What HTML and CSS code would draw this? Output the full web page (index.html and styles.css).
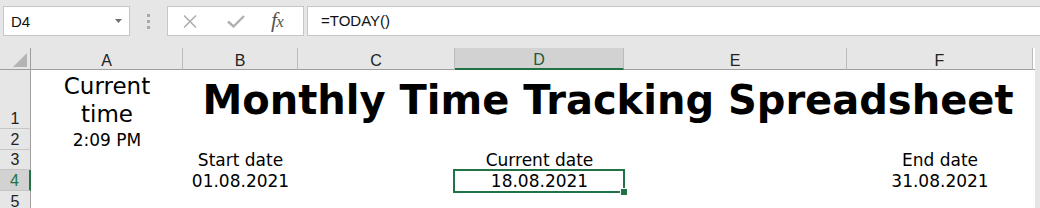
FILE: index.html
```html
<!DOCTYPE html>
<html lang="en">
<head>
  <meta charset="UTF-8">
  <meta name="viewport" content="width=device-width, initial-scale=1.0">
  <title>Monthly Time Tracking Spreadsheet</title>
  <link rel="stylesheet" href="styles.css">
</head>
<body>
  <!-- Formula bar -->
  <div class="formula-bar">
    <div class="name-box">
      <span>D4</span>
      <svg class="caret" width="7" height="4" viewBox="0 0 7 4"><polygon points="0,0 7,0 3.5,4" fill="#707070"/></svg>
    </div>
    <div class="grip"><i></i><i></i><i></i></div>
    <div class="fx-buttons">
      <svg class="icon-cancel" width="14" height="13" viewBox="0 0 14 13">
        <path d="M1 0.5 L13 12.5 M13 0.5 L1 12.5" stroke="#a8a8a8" stroke-width="1.4" fill="none"/>
      </svg>
      <svg class="icon-enter" width="18" height="13" viewBox="0 0 18 13">
        <path d="M1 6.5 L6.5 11.5 L17 1" stroke="#b0b0b0" stroke-width="2.4" fill="none"/>
      </svg>
      <span class="fx">f<small>x</small></span>
    </div>
    <div class="formula-input">=TODAY()</div>
  </div>

  <!-- Sheet grid -->
  <div class="sheet">
    <div class="corner"><span class="corner-tri"></span></div>
    <div class="col-head">A</div>
    <div class="col-head">B</div>
    <div class="col-head">C</div>
    <div class="col-head active">D</div>
    <div class="col-head">E</div>
    <div class="col-head">F</div>
    <div class="col-head rest"></div>

    <!-- Row 1 -->
    <div class="row-head">1</div>
    <div class="cell big">Current<br>time</div>
    <div class="cell title">Monthly Time Tracking Spreadsheet</div>
    <div class="cell"></div>

    <!-- Row 2 -->
    <div class="row-head">2</div>
    <div class="cell">2:09 PM</div>
    <div class="cell"></div><div class="cell"></div><div class="cell"></div>
    <div class="cell"></div><div class="cell"></div><div class="cell"></div>

    <!-- Row 3 -->
    <div class="row-head">3</div>
    <div class="cell"></div>
    <div class="cell">Start date</div>
    <div class="cell"></div>
    <div class="cell">Current date</div>
    <div class="cell"></div>
    <div class="cell">End date</div>
    <div class="cell"></div>

    <!-- Row 4 -->
    <div class="row-head active">4</div>
    <div class="cell"></div>
    <div class="cell">01.08.2021</div>
    <div class="cell"></div>
    <div class="cell selected">18.08.2021</div>
    <div class="cell"></div>
    <div class="cell">31.08.2021</div>
    <div class="cell"></div>

    <!-- Row 5 -->
    <div class="row-head">5</div>
    <div class="cell"></div><div class="cell"></div><div class="cell"></div>
    <div class="cell"></div><div class="cell"></div><div class="cell"></div><div class="cell"></div>
  </div>
</body>
</html>
```

FILE: styles.css
```css
/* Page */
body {
  margin: 0;
  width: 1040px;
  height: 208px;
  overflow: hidden;
  background-color: #e6e6e6;
  font-family: "Liberation Sans", Arial, sans-serif;
}

/* Formula bar */
.formula-bar {
  display: flex;
  align-items: flex-start;
  height: 48px;
  box-sizing: border-box;
  padding: 6px 0 0 3px;
}

.name-box {
  display: flex;
  align-items: center;
  width: 127px;
  height: 30px;
  box-sizing: border-box;
  padding: 0 7px 0 7px;
  border: 1px solid #c6c6c6;
  background-color: #fff;
  font-size: 15px;
  color: #111;
}

.caret {
  margin-left: auto;
  margin-top: -1px;
}

.grip {
  display: flex;
  flex-direction: column;
  gap: 3px;
  margin-left: 17px;
  padding-top: 8px;
}

.grip i {
  display: block;
  width: 3px;
  height: 3px;
  background-color: #a9a9a9;
}

.fx-buttons {
  display: flex;
  align-items: center;
  width: 137px;
  height: 30px;
  box-sizing: border-box;
  margin-left: 17px;
  padding-left: 15px;
  border: 1px solid #c6c6c6;
  background-color: #fff;
}

.icon-enter {
  margin-left: 30px;
  margin-top: 1px;
}

.fx {
  margin-left: 26px;
  margin-top: -2px;
  font-family: "Liberation Serif", "Times New Roman", serif;
  font-style: italic;
  font-size: 22px;
  color: #555;
  letter-spacing: -1px;
}

.fx small {
  font-size: 17px;
}

.formula-input {
  flex: 1;
  height: 30px;
  box-sizing: border-box;
  margin-left: 3px;
  margin-right: -2px;
  padding-left: 13px;
  border: 1px solid #c6c6c6;
  background-color: #fff;
  font-size: 15px;
  line-height: 28px;
  color: #111;
}

/* Sheet */
.sheet {
  display: grid;
  grid-template-columns: 31px 152px 115px 157px 169px 223px 186px 2px;
  grid-template-rows: 22px 59px 21px 20px 21px 21px;
  width: 1035px;
  background-color: #fff;
}

.corner {
  display: flex;
  justify-content: flex-end;
  align-items: flex-end;
  padding: 0 3px 2px 0;
  background-color: #e6e6e6;
  border-right: 1px solid #9e9e9e;
  border-bottom: 1px solid #9e9e9e;
}

.corner-tri {
  width: 0;
  height: 0;
  border-left: 14px solid transparent;
  border-bottom: 14px solid #b4b4b4;
}

.col-head {
  display: flex;
  justify-content: center;
  align-items: flex-end;
  background-color: #e6e6e6;
  border-right: 1px solid #bcbcbc;
  border-bottom: 1px solid #9e9e9e;
  font-size: 16px;
  line-height: 17px;
  color: #222;
}

.col-head.active {
  background-color: #d2d2d2;
  border-bottom: 2px solid #217346;
  color: #1c5a38;
  line-height: 16px;
}

.col-head.rest {
  border-right: none;
  background-color: #fff;
}

.row-head {
  display: flex;
  justify-content: center;
  align-items: flex-end;
  padding-bottom: 1px;
  background-color: #e6e6e6;
  border-right: 1px solid #9e9e9e;
  border-bottom: 1px solid #c6c6c6;
  font-size: 16px;
  line-height: 17px;
  color: #222;
}

.row-head.active {
  background-color: #d2d2d2;
  border-right: 2px solid #217346;
  color: #217346;
}

/* Cells */
.cell {
  display: flex;
  justify-content: center;
  align-items: flex-end;
  font-family: "DejaVu Sans", Verdana, sans-serif;
  font-size: 17px;
  line-height: 20px;
  color: #000;
  white-space: nowrap;
}

.cell.big {
  text-align: center;
  font-size: 23px;
  line-height: 28px;
  padding-bottom: 1px;
}

.cell.title {
  grid-column: 3 / 8;
  font-size: 40px;
  font-weight: bold;
  line-height: 48px;
  padding-bottom: 5px;
}

.cell.selected {
  position: relative;
}

.cell.selected::before {
  content: "";
  position: absolute;
  top: -1px;
  left: -2px;
  right: -1px;
  bottom: -2px;
  border: 2px solid #217346;
}

.cell.selected::after {
  content: "";
  position: absolute;
  right: -3px;
  bottom: -4px;
  width: 6px;
  height: 6px;
  background-color: #217346;
  border-left: 1px solid #fff;
  border-top: 1px solid #fff;
}
```
